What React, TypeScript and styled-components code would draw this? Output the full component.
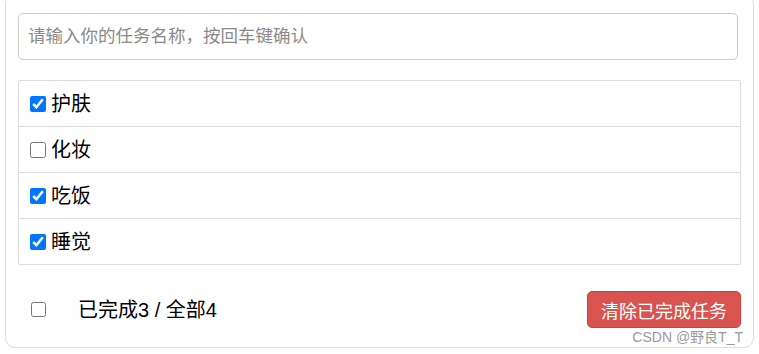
import { useState } from 'react';
import styled, { createGlobalStyle } from 'styled-components';

const GlobalStyle = createGlobalStyle`
  body {
    margin: 0;
    background: #fff;
    font-family: "Liberation Sans", "Noto Sans CJK SC", sans-serif;
    overflow: hidden;
  }
`;

const Page = styled.div`
  position: relative;
  width: 759px;
  height: 354px;
`;

const Panel = styled.div`
  margin: -6px 5px 0;
  border: 1px solid #ddd;
  border-radius: 10px;
  padding: 18px 12px 19px 12px;
  width: 749px;
  box-sizing: border-box;
`;

const Input = styled.input`
  display: block;
  box-sizing: border-box;
  width: 720px;
  height: 47px;
  border: 1px solid #ccc;
  border-radius: 5px;
  padding: 0 9px;
  font-size: 17.5px;
  font-family: "Liberation Sans", "Noto Sans CJK SC", sans-serif;
  color: #333;
  outline: none;
  &::placeholder {
    color: #8a8a8a;
  }
`;

const List = styled.ul`
  list-style: none;
  margin: 20px 0 0;
  padding: 0;
  border: 1px solid #ddd;
  border-radius: 2px;
`;

const Item = styled.li`
  display: flex;
  align-items: center;
  height: 45px;
  padding-left: 11px;
  & + & {
    border-top: 1px solid #ddd;
  }
`;

const Check = styled.input.attrs({ type: 'checkbox' })<{ $size?: number }>`
  width: ${(p) => p.$size ?? 16}px;
  height: ${(p) => p.$size ?? 16}px;
  margin: 0;
`;

const Label = styled.span`
  margin-left: 5px;
  font-size: 20px;
  line-height: 24px;
  color: #000;
`;

const Footer = styled.div`
  display: flex;
  align-items: center;
  margin-top: 26px;
  padding-left: 13px;
  height: 37px;
`;

const Summary = styled.span`
  margin-left: 32px;
  font-size: 20px;
  line-height: 24px;
  color: #000;
  flex: 1;
`;

const DangerButton = styled.button`
  width: 154px;
  height: 37px;
  background: #d9534f;
  border: 1px solid #d43f3a;
  border-radius: 5px;
  color: #fff;
  font-size: 18px;
  font-family: "Liberation Sans", "Noto Sans CJK SC", sans-serif;
  padding: 0;
`;

const Watermark = styled.div`
  position: absolute;
  right: 16px;
  bottom: 3px;
  font-size: 14px;
  line-height: 16px;
  color: #9a9a9a;
`;

const initial = [
  { id: 1, name: '护肤', done: true },
  { id: 2, name: '化妆', done: false },
  { id: 3, name: '吃饭', done: true },
  { id: 4, name: '睡觉', done: true },
];

export default function App() {
  const [todos, setTodos] = useState(initial);
  const doneCount = todos.filter((t) => t.done).length;

  const toggle = (id: number) =>
    setTodos(todos.map((t) => (t.id === id ? { ...t, done: !t.done } : t)));

  return (
    <Page>
      <GlobalStyle />
      <Panel>
        <Input placeholder="请输入你的任务名称，按回车键确认" />
        <List>
          {todos.map((t) => (
            <Item key={t.id}>
              <Check checked={t.done} onChange={() => toggle(t.id)} />
              <Label>{t.name}</Label>
            </Item>
          ))}
        </List>
        <Footer>
          <Check $size={15} checked={false} onChange={() => {}} />
          <Summary>
            已完成{doneCount} / 全部{todos.length}
          </Summary>
          <DangerButton onClick={() => setTodos(todos.filter((t) => !t.done))}>
            清除已完成任务
          </DangerButton>
        </Footer>
      </Panel>
      <Watermark>CSDN @野良T_T</Watermark>
    </Page>
  );
}
